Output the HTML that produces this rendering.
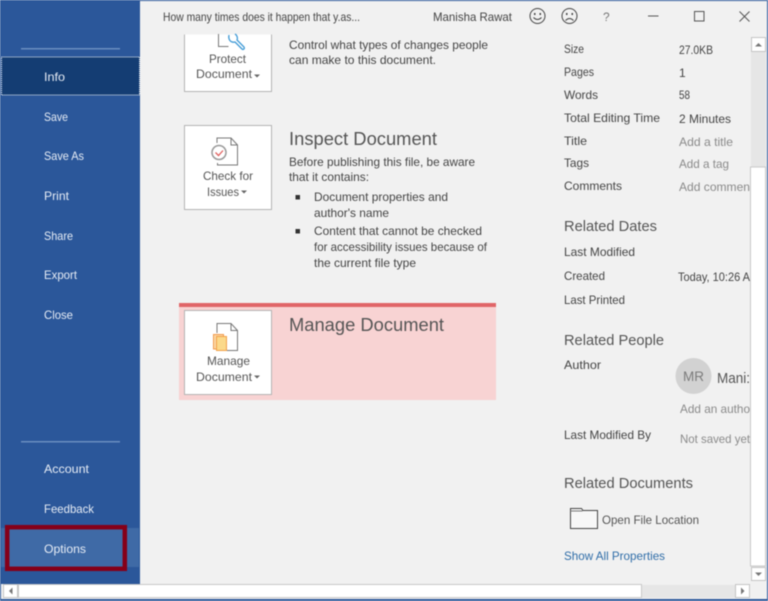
<!DOCTYPE html>
<html><head><meta charset="utf-8"><style>
html,body{margin:0;padding:0;background:#f1f1f1;width:768px;height:601px;overflow:hidden}
svg{display:block;filter:blur(.4px)}
text{font-family:"Liberation Sans",sans-serif;font-size:12px;fill:#444}
.n text{fill:#e6ecf5}
.g text{fill:#8a8a8a}
.h text{font-size:15px;fill:#555}
</style></head><body>
<svg width="768" height="601" viewBox="0 0 768 601" xmlns="http://www.w3.org/2000/svg">
<rect width="768" height="601" fill="#f1f1f1"/>
<!-- sidebar -->
<rect x="0" y="0" width="140" height="584" fill="#2b579a"/>
<rect x="21" y="48" width="99" height="1.5" fill="#6a8dc0"/>
<rect x="21" y="441" width="99" height="1.5" fill="#6a8dc0"/>
<rect x="1.5" y="57" width="138" height="38" fill="#143d73" stroke="#fff" stroke-width="1" stroke-dasharray="1 1"/>
<rect x="1" y="528" width="138" height="39" fill="#3f6aa6"/>
<rect x="7.2" y="527.2" width="117.6" height="41.6" fill="none" stroke="#850019" stroke-width="4.5"/>
<g class="n">
<text lengthAdjust="spacingAndGlyphs" x="44" y="81" textLength="21">Info</text>
<text lengthAdjust="spacingAndGlyphs" x="44" y="121" textLength="24">Save</text>
<text lengthAdjust="spacingAndGlyphs" x="44" y="160" textLength="40">Save As</text>
<text lengthAdjust="spacingAndGlyphs" x="44" y="200" textLength="25">Print</text>
<text lengthAdjust="spacingAndGlyphs" x="44" y="240" textLength="29">Share</text>
<text lengthAdjust="spacingAndGlyphs" x="44" y="279" textLength="33">Export</text>
<text lengthAdjust="spacingAndGlyphs" x="44" y="319" textLength="29">Close</text>
<text lengthAdjust="spacingAndGlyphs" x="44" y="473" textLength="45">Account</text>
<text lengthAdjust="spacingAndGlyphs" x="44" y="513" textLength="50">Feedback</text>
<text lengthAdjust="spacingAndGlyphs" x="44" y="553" textLength="42">Options</text>
</g>
<!-- window border -->
<rect x="0" y="0" width="768" height="1" fill="#2b579a"/>
<rect x="767" y="0" width="1" height="601" fill="#2b579a"/>
<rect x="0" y="584" width="1" height="17" fill="#2b579a"/>
<rect x="0" y="599" width="768" height="2" fill="#2b579a"/>
<!-- title bar -->
<text lengthAdjust="spacingAndGlyphs" x="163" y="21" textLength="197">How many times does it happen that y.as...</text>
<text lengthAdjust="spacingAndGlyphs" x="433" y="21" textLength="79">Manisha Rawat</text>
<g fill="none" stroke="#444" stroke-width="1">
<circle cx="537.5" cy="16" r="7.5"/>
<circle cx="569.5" cy="16" r="7.5"/>
<path d="M533.5 17.5q4 4 8 0"/>
<path d="M565.5 20.5q4-4 8 0"/>
<path d="M648 16h10.5" stroke="#555"/>
<rect x="694.5" y="11.5" width="9.5" height="9.5" stroke="#555"/>
<path d="M739.5 11.5l10 10M749.5 11.5l-10 10" stroke="#555"/>
</g>
<g fill="#444"><rect x="534" y="13" width="1.5" height="2"/><rect x="539.5" y="13" width="1.5" height="2"/><rect x="566" y="13" width="1.5" height="2"/><rect x="571.5" y="13" width="1.5" height="2"/></g>
<text x="603" y="21" textLength="7" style="fill:#777">?</text>
<!-- protect -->
<path d="M184.5 34.5V91.500h87V34.500" fill="#fff" stroke="#b4b4b4"/>
<path d="M218.500 34v12.500h10" fill="none" stroke="#777"/>
<g fill="none" stroke="#3f9ad6" stroke-width="1.300"><path d="M229 35c-1 5 2 8 6 7l7 7c1 1 3 0 2-2l-7-7c1-2 0-5-2-6"/></g>
<text lengthAdjust="spacingAndGlyphs" x="209" y="63" textLength="37" style="fill:#555">Protect</text>
<text lengthAdjust="spacingAndGlyphs" x="196" y="78" textLength="56" style="fill:#555">Document</text>
<path d="M254 74.500h6l-3 3z" fill="#666"/>
<text lengthAdjust="spacingAndGlyphs" x="289" y="49" textLength="199">Control what types of changes people</text>
<text lengthAdjust="spacingAndGlyphs" x="289" y="64" textLength="147">can make to this document.</text>
<!-- inspect -->
<rect x="184.500" y="125.500" width="87" height="84" fill="#fff" stroke="#b4b4b4"/>
<path d="M217 143v-5h14l6.500 7v20h-20v-2M231 138v7h6.500" fill="none" stroke="#777"/>
<circle cx="219" cy="152.500" r="7" fill="#fff" stroke="#999" stroke-width="1.500"/>
<path d="M215.500 152.500l3 3 4.500-5" fill="none" stroke="#e0605e" stroke-width="1.300"/>
<text lengthAdjust="spacingAndGlyphs" x="203" y="180" textLength="50" style="fill:#555">Check for</text>
<text lengthAdjust="spacingAndGlyphs" x="207" y="196" textLength="32" style="fill:#555">Issues</text>
<path d="M241 190.500h6l-3 3z" fill="#666"/>
<text lengthAdjust="spacingAndGlyphs" x="289" y="145" textLength="148" style="font-size:18px;fill:#555">Inspect Document</text>
<text lengthAdjust="spacingAndGlyphs" x="289" y="166" textLength="186">Before publishing this file, be aware</text>
<text lengthAdjust="spacingAndGlyphs" x="289" y="181" textLength="80">that it contains:</text>
<rect x="295.500" y="195" width="4.500" height="4.500" fill="#333"/>
<rect x="295.500" y="229" width="4.500" height="4.500" fill="#333"/>
<text lengthAdjust="spacingAndGlyphs" x="314" y="201" textLength="134">Document properties and</text>
<text lengthAdjust="spacingAndGlyphs" x="314" y="217" textLength="75">author's name</text>
<text lengthAdjust="spacingAndGlyphs" x="314" y="235" textLength="168">Content that cannot be checked</text>
<text lengthAdjust="spacingAndGlyphs" x="314" y="251" textLength="173">for accessibility issues because of</text>
<text lengthAdjust="spacingAndGlyphs" x="314" y="267" textLength="102">the current file type</text>
<!-- manage -->
<rect x="179" y="303" width="317" height="97" fill="#f8d3d3"/>
<rect x="179" y="303" width="317" height="4" fill="#e06568"/>
<rect x="184.500" y="310.500" width="87" height="84" fill="#fff" stroke="#b4b4b4"/>
<path d="M217 333v-9.500h14l6.500 7v20h-11M231 323.500v7h6.500" fill="none" stroke="#777"/>
<rect x="213.500" y="334.500" width="10" height="14.500" fill="#fbd9a8" stroke="#f2994a"/>
<rect x="216.500" y="336.500" width="10" height="14" fill="#fbd98a" stroke="#f2a14a"/>
<text lengthAdjust="spacingAndGlyphs" x="207" y="365" textLength="43" style="fill:#555">Manage</text>
<text lengthAdjust="spacingAndGlyphs" x="196" y="381" textLength="56" style="fill:#555">Document</text>
<path d="M254 375.500h6l-3 3z" fill="#666"/>
<text lengthAdjust="spacingAndGlyphs" x="289" y="331" textLength="155" style="font-size:18px;fill:#555">Manage Document</text>
<!-- properties -->
<text lengthAdjust="spacingAndGlyphs" x="564" y="53" textLength="20">Size</text>
<text lengthAdjust="spacingAndGlyphs" x="564" y="76" textLength="30">Pages</text>
<text lengthAdjust="spacingAndGlyphs" x="564" y="99" textLength="34">Words</text>
<text lengthAdjust="spacingAndGlyphs" x="564" y="122" textLength="96">Total Editing Time</text>
<text lengthAdjust="spacingAndGlyphs" x="564" y="145" textLength="23">Title</text>
<text lengthAdjust="spacingAndGlyphs" x="564" y="167" textLength="25">Tags</text>
<text lengthAdjust="spacingAndGlyphs" x="564" y="190" textLength="58">Comments</text>
<text lengthAdjust="spacingAndGlyphs" x="679" y="54" textLength="34">27.0KB</text>
<text x="679" y="77">1</text>
<text lengthAdjust="spacingAndGlyphs" x="679" y="99" textLength="11">58</text>
<text lengthAdjust="spacingAndGlyphs" x="679" y="123" textLength="52">2 Minutes</text>
<g class="g">
<text lengthAdjust="spacingAndGlyphs" x="679" y="146" textLength="54">Add a title</text>
<text lengthAdjust="spacingAndGlyphs" x="679" y="168" textLength="50">Add a tag</text>
<text lengthAdjust="spacingAndGlyphs" x="679" y="191" textLength="71">Add commen</text>
<text lengthAdjust="spacingAndGlyphs" x="680" y="413" textLength="70">Add an autho</text>
<text lengthAdjust="spacingAndGlyphs" x="680" y="443" textLength="70">Not saved yet</text>
</g>
<g class="h">
<text lengthAdjust="spacingAndGlyphs" x="564" y="231" textLength="93">Related Dates</text>
<text lengthAdjust="spacingAndGlyphs" x="564" y="345" textLength="100">Related People</text>
<text lengthAdjust="spacingAndGlyphs" x="564" y="488" textLength="129">Related Documents</text>
</g>
<text lengthAdjust="spacingAndGlyphs" x="564" y="256" textLength="71">Last Modified</text>
<text lengthAdjust="spacingAndGlyphs" x="564" y="280" textLength="41">Created</text>
<text lengthAdjust="spacingAndGlyphs" x="678" y="281" textLength="72">Today, 10:26 A</text>
<text lengthAdjust="spacingAndGlyphs" x="564" y="304" textLength="61">Last Printed</text>
<text lengthAdjust="spacingAndGlyphs" x="564" y="369" textLength="37">Author</text>
<circle cx="693.500" cy="376" r="18" fill="#d2d2d2"/>
<text lengthAdjust="spacingAndGlyphs" x="683" y="381" textLength="21" style="font-size:14px;fill:#7b7b7b">MR</text>
<text lengthAdjust="spacingAndGlyphs" x="717" y="383" textLength="33" style="font-size:15px;fill:#555">Mani:</text>
<text lengthAdjust="spacingAndGlyphs" x="564" y="439" textLength="87">Last Modified By</text>
<path d="M570.500 528.500V508.500h11l1.500 2h14.500v18z" fill="#f7f7f7" stroke="#444"/>
<path d="M570.500 511h12" stroke="#777" fill="none"/>
<text lengthAdjust="spacingAndGlyphs" x="602" y="524" textLength="97" style="fill:#555">Open File Location</text>
<text lengthAdjust="spacingAndGlyphs" x="564" y="560" textLength="101" style="fill:#2f6da8">Show All Properties</text>
<!-- right scrollbar -->
<rect x="751" y="37" width="15" height="544" fill="#e6e6e6"/>
<rect x="751.500" y="37.500" width="14" height="14" fill="#fff" stroke="#c4c4c4"/>
<path d="M755 46.500h7l-3.500-3.500z" fill="#777"/>
<rect x="750.500" y="167" width="15" height="399" fill="#fff" stroke="#c8c8c8"/>
<rect x="751.500" y="567.500" width="14" height="13" fill="#fff" stroke="#c4c4c4"/>
<path d="M755 572.500h7l-3.500 3.500z" fill="#777"/>
<!-- bottom scrollbar -->
<rect x="1" y="584" width="766" height="15" fill="#f1f1f1"/>
<rect x="18" y="585" width="732" height="13" fill="#e6e6e6"/>
<rect x="3.500" y="584.500" width="14" height="13" fill="#fff" stroke="#c4c4c4"/>
<path d="M12.500 587.500v7l-3.500-3.500z" fill="#777"/>
<rect x="18.500" y="584.500" width="623" height="13" fill="#fff" stroke="#c8c8c8"/>
<rect x="735.500" y="584.500" width="14" height="13" fill="#fff" stroke="#c4c4c4"/>
<path d="M741 587.500v7l3.500-3.500z" fill="#777"/>
</svg>
</body></html>
